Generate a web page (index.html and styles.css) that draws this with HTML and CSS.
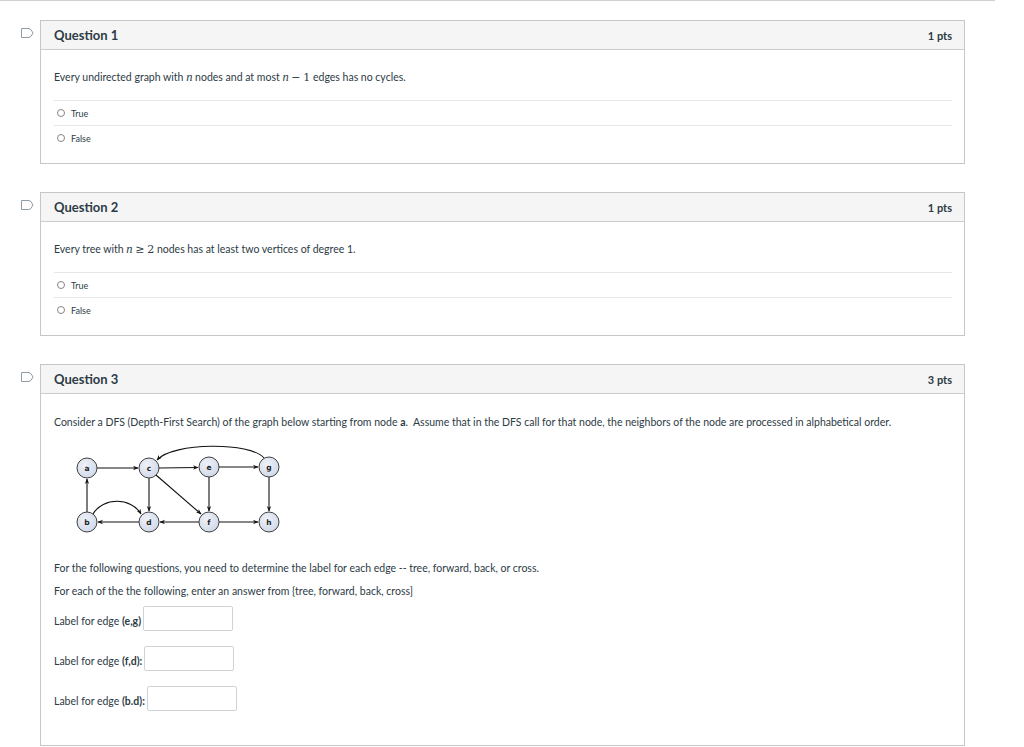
FILE: index.html
```html
<!DOCTYPE html>
<html>
<head>
<meta charset="utf-8">
<link rel="stylesheet" href="styles.css">
</head>
<body>
<div class="topline"></div>
<main class="quiz">
  <section class="question">
    <div class="flag"><svg width="13" height="10" viewBox="0 0 13 10"><path d="M0.5 0.5 H8 Q10 0.5 12 5 Q10 9.5 8 9.5 H0.5 Z" fill="none" stroke="#8d9ca8" stroke-width="1"/></svg></div>
    <div class="box">
      <header class="qhead"><span class="qtitle">Question 1</span><span class="qpts">1 pts</span></header>
      <div class="qbody">
        <p class="qtext">Every undirected graph with <span class="m">n</span> nodes and at most <span class="m">n</span> <span class="mo">−</span> <span class="mn">1</span> edges has no cycles.</p>
        <div class="answers">
          <div class="answer"><span class="radio"></span>True</div>
          <div class="answer"><span class="radio"></span>False</div>
        </div>
      </div>
    </div>
  </section>

  <section class="question">
    <div class="flag"><svg width="13" height="10" viewBox="0 0 13 10"><path d="M0.5 0.5 H8 Q10 0.5 12 5 Q10 9.5 8 9.5 H0.5 Z" fill="none" stroke="#8d9ca8" stroke-width="1"/></svg></div>
    <div class="box">
      <header class="qhead"><span class="qtitle">Question 2</span><span class="qpts">1 pts</span></header>
      <div class="qbody">
        <p class="qtext">Every tree with <span class="m">n</span> <span class="mo">≥</span> <span class="mn">2</span> nodes has at least two vertices of degree 1.</p>
        <div class="answers">
          <div class="answer"><span class="radio"></span>True</div>
          <div class="answer"><span class="radio"></span>False</div>
        </div>
      </div>
    </div>
  </section>

  <section class="question">
    <div class="flag"><svg width="13" height="10" viewBox="0 0 13 10"><path d="M0.5 0.5 H8 Q10 0.5 12 5 Q10 9.5 8 9.5 H0.5 Z" fill="none" stroke="#8d9ca8" stroke-width="1"/></svg></div>
    <div class="box last">
      <header class="qhead"><span class="qtitle">Question 3</span><span class="qpts">3 pts</span></header>
      <div class="qbody">
        <p class="qtext">Consider a DFS (Depth-First Search) of the graph below starting from node <b>a</b>.&nbsp; Assume that in the DFS call for that node, the neighbors of the node are processed in alphabetical order.</p>
        <div class="graph">
          <svg width="212" height="100" viewBox="0 0 212 100">
            <defs>
              <marker id="ah" viewBox="0 0 10 10" refX="9" refY="5" markerWidth="5" markerHeight="5" orient="auto">
                <path d="M0 1 L10 5 L0 9 L3 5 Z" fill="#111"/>
              </marker>
              <radialGradient id="nf" cx="0.4" cy="0.35" r="0.7">
                <stop offset="0" stop-color="#eef1f8"/>
                <stop offset="1" stop-color="#d0d8e8"/>
              </radialGradient>
            </defs>
            <g stroke="#111" stroke-width="1.1" fill="none" marker-end="url(#ah)">
              <line x1="24" y1="28" x2="65" y2="28"/>
              <line x1="86" y1="28" x2="125" y2="27.5"/>
              <line x1="146" y1="27" x2="185" y2="27"/>
              <path d="M191 18 C178 2 100 2 84 20"/>
              <line x1="76" y1="38" x2="76" y2="71"/>
              <line x1="83" y1="35" x2="128" y2="74"/>
              <line x1="136" y1="37" x2="136" y2="71"/>
              <line x1="196" y1="37" x2="196" y2="71"/>
              <line x1="14" y1="72" x2="14" y2="39"/>
              <path d="M20 74 C30 57 58 57 68 74"/>
              <line x1="66" y1="82" x2="25" y2="82"/>
              <line x1="126" y1="82" x2="87" y2="82"/>
              <line x1="146" y1="82" x2="185" y2="82"/>
            </g>
            <g class="nodes">
              <circle cx="14" cy="28" r="10"/>
              <circle cx="14" cy="82" r="10"/>
              <circle cx="76" cy="28" r="10"/>
              <circle cx="76" cy="82" r="10"/>
              <circle cx="136" cy="27" r="10"/>
              <circle cx="136" cy="82" r="10"/>
              <circle cx="196" cy="27" r="10"/>
              <circle cx="196" cy="82" r="10"/>
            </g>
            <g class="labels">
              <text x="14" y="30.5">a</text>
              <text x="14" y="84.5">b</text>
              <text x="76" y="30.5">c</text>
              <text x="76" y="84.5">d</text>
              <text x="136" y="29.5">e</text>
              <text x="136" y="84.5">f</text>
              <text x="196" y="29.5">g</text>
              <text x="196" y="84.5">h</text>
            </g>
          </svg>
        </div>
        <p class="qtext">For the following questions, you need to determine the label for each edge -- tree, forward, back, or cross.</p>
        <p class="qtext">For each of the the following, enter an answer from {tree, forward, back, cross]</p>
        <div class="blank"><span class="lbl">Label for edge <b>(e,g)</b></span><span class="field"></span></div>
        <div class="blank"><span class="lbl">Label for edge <b>(f,d):</b></span><span class="field"></span></div>
        <div class="blank"><span class="lbl">Label for edge <b>(b.d):</b></span><span class="field"></span></div>
      </div>
    </div>
  </section>
</main>
</body>
</html>
```

FILE: styles.css
```css
html, body {
  margin: 0;
  padding: 0;
  background: #ffffff;
}
body {
  font-family: Lato, "Open Sans", sans-serif;
  color: #2d3b45;
  font-size: 10.5px;
}
.topline {
  width: 995px;
  height: 1px;
  background: #cfcfcf;
}
.quiz {
  padding: 19px 0 0 21px;
}
.question {
  display: flex;
  align-items: flex-start;
  margin-bottom: 28px;
}
.flag {
  width: 19px;
  padding-top: 8px;
  line-height: 0;
}
.box {
  width: 923px;
  border: 1px solid #c4c8cb;
}
.qhead {
  height: 28px;
  display: flex;
  align-items: center;
  justify-content: space-between;
  padding: 0 12px 0 13px;
  background: #f5f5f5;
  border-bottom: 1px solid #c7cdd1;
}
.qtitle {
  font-weight: 700;
  font-size: 13px;
}
.qpts {
  font-weight: 700;
  font-size: 11px;
}
.qbody {
  padding: 19px 12px 13px 13px;
}
.last .qbody {
  padding-top: 20px;
  padding-bottom: 19px;
}
.qtext {
  margin: 0 0 7px;
  line-height: 16px;
  font-size: 10.5px;
}
.answers {
  margin-top: 15px;
}
.answer {
  height: 24px;
  border-top: 1px solid #e6e6e6;
  display: flex;
  align-items: center;
  font-size: 9px;
}
.radio {
  width: 6px;
  height: 6px;
  border: 1px solid #858585;
  border-radius: 50%;
  margin: 0 6px 0 3px;
}
.m {
  font-family: "Liberation Serif", serif;
  font-style: italic;
  font-size: 12.5px;
  line-height: 10px;
}
.mo, .mn {
  font-family: "DejaVu Serif", "Liberation Serif", serif;
  font-size: 11px;
  line-height: 10px;
}
.graph {
  margin: 10px 0 20px 19px;
  line-height: 0;
}
.nodes circle {
  fill: url(#nf);
  stroke: #3f3f3f;
  stroke-width: 1;
}
.labels text {
  font-family: "DejaVu Sans", sans-serif;
  font-weight: 700;
  font-size: 7.5px;
  fill: #1e1e1e;
  text-anchor: middle;
}
.blank {
  display: flex;
  align-items: center;
  height: 25px;
  margin-bottom: 15px;
  font-size: 10.5px;
}
.blank:first-of-type {
  margin-top: 8px;
}
.lbl {
  margin-top: 5px;
}
.field {
  display: inline-block;
  width: 88px;
  height: 23px;
  margin-left: 2px;
  border: 1px solid #cfd3d6;
  border-radius: 2px;
  background: #fff;
}
```
